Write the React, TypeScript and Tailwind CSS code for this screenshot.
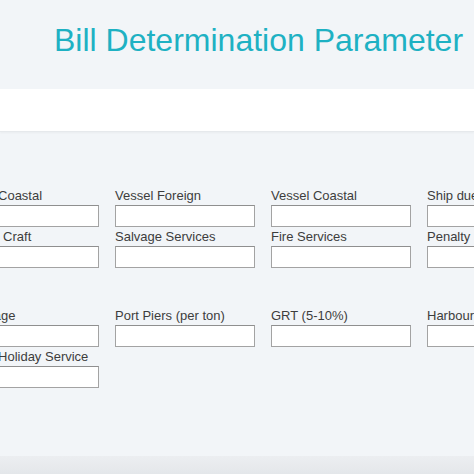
const rows: string[][] = [
  ['Cargo Coastal', 'Vessel Foreign', 'Vessel Coastal', 'Ship dues'],
  ['Towing Craft', 'Salvage Services', 'Fire Services', 'Penalty'],
  ['Wharfage', 'Port Piers (per ton)', 'GRT (5-10%)', 'Harbour Dues'],
  ['Public Holiday Service'],
];

export default function App() {
  return (
    <div
      className="w-[474px] h-[474px] overflow-hidden bg-[#f2f5f8] flex flex-col"
      style={{ fontFamily: '"Liberation Sans", Arial, sans-serif' }}
    >
      <div className="h-[89px] shrink-0 pt-[24px] pl-[54px]">
        <h1 className="text-[32px] leading-8 text-[#1eb1c3] whitespace-nowrap">
          Bill Determination Parameter
        </h1>
      </div>

      <div className="h-[43px] shrink-0 bg-white border-b border-[#e6e9ec] shadow-[0_1px_2px_rgba(0,0,0,0.04)]" />

      <div className="flex-1 pt-[56px] -ml-[41px]">
        {rows.map((row, i) => (
          <div
            key={i}
            className={`flex gap-4 mb-[2px] ${i === 2 ? 'mt-[40px]' : ''}`}
          >
            {row.map((label) => (
              <Field key={label} label={label} />
            ))}
          </div>
        ))}
      </div>

      <div className="h-[18px] shrink-0 bg-gradient-to-b from-[#eceef1] to-[#e4e7ea]" />
    </div>
  );
}

function Field({ label }: { label: string }) {
  return (
    <div className="w-[140px] shrink-0">
      <div className="text-[13px] leading-[15px] text-[#3d3d3d] whitespace-nowrap">{label}</div>
      <input
        type="text"
        className="mt-[2px] block w-[140px] h-[22px] bg-white border border-[#a3a3a3] border-t-[#8f8f8f] outline-none"
      />
    </div>
  );
}
